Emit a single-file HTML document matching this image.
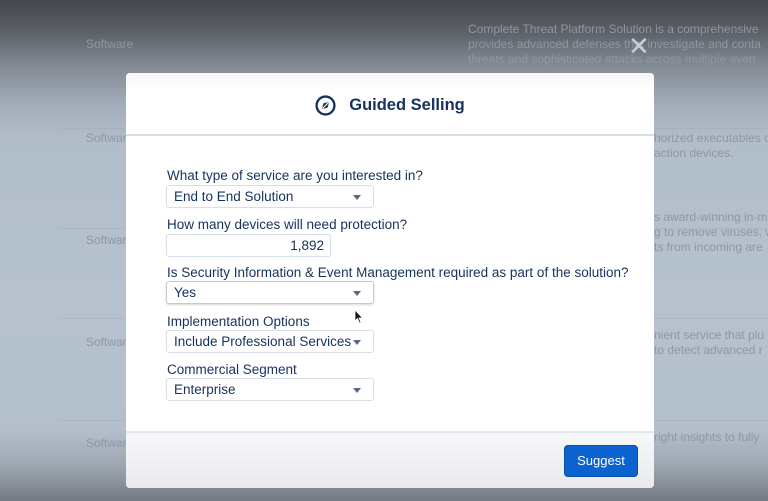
<!DOCTYPE html>
<html><head><meta charset="utf-8"><style>
*{margin:0;padding:0;box-sizing:border-box}
body{width:768px;height:501px;overflow:hidden;position:relative;font-family:"Liberation Sans",sans-serif;
background:linear-gradient(180deg,#44474c 0px,#5a5e65 30px,#7e848c 60px,#a3adb9 105px,#b2bdca 140px,#b6c1ce 300px,#b4bfcc 430px,#9ea7b2 465px,#737a84 501px);}
.bg{position:absolute;color:#8e97a3;font-size:12px;line-height:15px;white-space:nowrap}
.hl{position:absolute;left:60px;right:0;height:1px;background:rgba(150,160,175,.3)}
.modal{position:absolute;left:126px;top:73px;width:528px;height:415px;background:#fff;border-radius:4px;overflow:hidden}
.hdr{height:63px;border-bottom:2px solid #d8dde6;background:linear-gradient(#f6f7f9,#fff 30%);display:flex;align-items:center;justify-content:center;padding-top:4px}
.hdr span{font-size:16.5px;font-weight:bold;color:#16325c;margin-left:13px}
.lbl{position:absolute;left:41px;font-size:13.5px;color:#16325c;white-space:nowrap}
.sel,.inp{position:absolute;left:40px;width:208px;height:23px;border:1px solid #d8dde6;border-radius:3px;font-size:13.5px;color:#16325c;padding:3px 0 0 7px;background:#fff;white-space:nowrap}
.sel::after{content:"";position:absolute;right:12px;top:9px;border-left:4px solid transparent;border-right:4px solid transparent;border-top:5px solid #54698d}
.ftr{position:absolute;left:0;right:0;bottom:0;height:57px;border-top:2px solid #e4e7ec;background:linear-gradient(#f7f8f9,#e9eaec)}
.btn{position:absolute;left:438px;top:12px;width:74px;height:32px;background:#0b63cf;border:1px solid #0a4fa8;border-radius:4px;color:#fff;font-size:13px;text-align:center;line-height:30px}
</style></head><body>
<div class="bg" style="left:86px;top:37px">Software</div>
<div class="bg" style="left:468px;top:22px">Complete Threat Platform Solution is a comprehensive<br>provides advanced defenses that investigate and conta<br>threats and sophisticated attacks across multiple aven</div>
<div class="hl" style="top:128px"></div>
<div class="bg" style="left:86px;top:131px">Software</div>
<div class="bg" style="left:654px;top:131px">horized executables c<br>action devices.</div>
<div class="hl" style="top:228px"></div>
<div class="bg" style="left:86px;top:233px">Software</div>
<div class="bg" style="left:654px;top:210px">s award-winning in-m<br>g to remove viruses, w<br>ts from incoming are</div>
<div class="hl" style="top:318px"></div>
<div class="bg" style="left:86px;top:335px">Software</div>
<div class="bg" style="left:654px;top:328px">nient service that plu<br>to detect advanced r</div>
<div class="hl" style="top:420px"></div>
<div class="bg" style="left:86px;top:436px">Software</div>
<div class="bg" style="left:654px;top:430px">right insights to fully</div>
<div style="position:absolute;left:628px;top:36px;font-size:26px;color:#c9ced6;line-height:20px">✕</div>
<div class="modal">
<div class="hdr"><svg width="21" height="21" viewBox="0 0 20 20"><circle cx="10" cy="10" r="8.5" fill="none" stroke="#16325c" stroke-width="2.2"/><path d="M6.5 13.5 L8 8 L13.5 6.5 L12 12 Z" fill="#16325c"/><path d="M7 13 L13 7" stroke="#fff" stroke-width="1"/></svg><span>Guided Selling</span></div>
<div class="lbl" style="top:95px">What type of service are you interested in?</div>
<div class="sel" style="top:112px">End to End Solution</div>
<div class="lbl" style="top:144px">How many devices will need protection?</div>
<div class="inp" style="top:161px;width:165px;text-align:right;padding-right:6px">1,892</div>
<div class="lbl" style="top:192px">Is Security Information &amp; Event Management required as part of the solution?</div>
<div class="sel" style="top:208px;border-color:#c5cad2;box-shadow:0 1px 2px rgba(0,0,0,.15)">Yes</div>
<div class="lbl" style="top:241px">Implementation Options</div>
<div class="sel" style="top:257px">Include Professional Services</div>
<div class="lbl" style="top:289px">Commercial Segment</div>
<div class="sel" style="top:305px">Enterprise</div>
<div class="ftr"><div class="btn">Suggest</div></div>
</div>
<svg style="position:absolute;left:354px;top:309px" width="10" height="15" viewBox="0 0 10 15"><path d="M1 1 L1 12 L3.5 9.5 L5.5 14 L7 13.3 L5 9 L8.5 9 Z" fill="#111" stroke="#fff" stroke-width=".8"/></svg>
</body></html>
